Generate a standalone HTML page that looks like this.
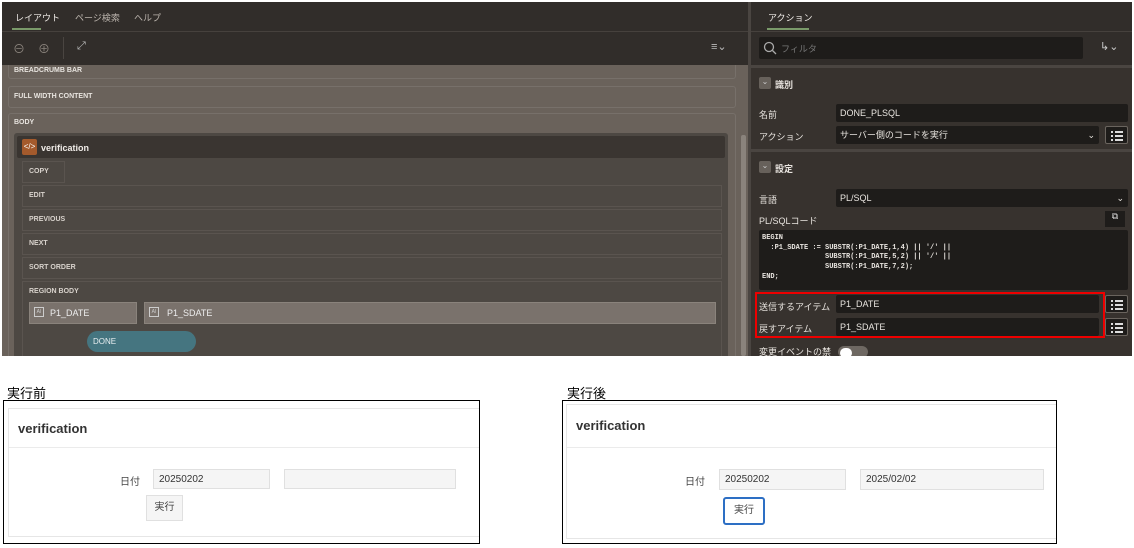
<!DOCTYPE html>
<html><head><meta charset="utf-8">
<style>
*{margin:0;padding:0;box-sizing:border-box}
body{width:1134px;height:548px;background:#fff;position:relative;overflow:hidden;font-family:"Liberation Sans","Noto Sans CJK JP",sans-serif}
.a{position:absolute}
.clip{position:absolute;left:0;top:0;width:1134px;height:356px;overflow:hidden}
.t{color:#e8e4df;font-size:9px;font-weight:bold}
.row{position:absolute;left:22px;width:700px;height:22px;border:1px solid #5a544f;background:#4d4843}
.row span{position:absolute;left:6px;top:6px;font-size:7px;color:#d8d2cc;font-weight:bold}
.rl{position:absolute;left:759px;font-size:9px;color:#e8e4df}
.ri{position:absolute;left:836px;width:292px;height:18px;background:#1e1c1a;border-radius:2px;color:#e8e4df;font-size:9px;padding:3px 4px;line-height:12px}
.lb{position:absolute;left:1105px;width:23px;height:18px;border:1px solid #6a645e;background:#1e1c1a;border-radius:2px}
.lb i{position:absolute;left:5px;width:12px;height:1.5px;background:#ddd}
.lb b{position:absolute;left:5px;width:2px;height:2px;background:#ddd}
.box{position:absolute;border:1px solid #000;background:#fff}
.inp{position:absolute;background:#f5f5f5;border:1px solid #e0e0e0;font-size:10px;color:#333;padding:0 5px;line-height:19px}
</style></head><body>
<div class="clip">
<div class="a" style="left:2px;top:2px;width:746px;height:354px;background:#6a625b"></div>
<div class="a" style="left:2px;top:2px;width:746px;height:30px;background:#312d2a;border-bottom:1px solid #46413d"></div>
<div class="a" style="left:15px;top:11px;font-size:9px;color:#f0ece8">レイアウト</div>
<div class="a" style="left:12px;top:28px;width:29px;height:2px;background:#7a9a6a"></div>
<div class="a" style="left:75px;top:11px;font-size:9px;color:#bbb4ad">ページ検索</div>
<div class="a" style="left:134px;top:11px;font-size:9px;color:#bbb4ad">ヘルプ</div>
<div class="a" style="left:2px;top:32px;width:746px;height:33px;background:#312d2a"></div>
<div class="a" style="left:13px;top:40px;font-size:12px;color:#8a837c">⊖</div>
<div class="a" style="left:38px;top:40px;font-size:12px;color:#8a837c">⊕</div>
<div class="a" style="left:63px;top:37px;width:1px;height:22px;background:#4a4541"></div>
<div class="a" style="left:77px;top:40px;font-size:11px;color:#bbb">⤢</div>
<div class="a" style="left:711px;top:40px;font-size:11px;color:#bbb">≡⌄</div>
<div class="a" style="left:8px;top:65px;width:728px;height:14px;border:1px solid #77706a;border-top:none;border-radius:0 0 3px 3px"></div>
<div class="a t" style="left:14px;top:67px;font-size:7px">BREADCRUMB BAR</div>
<div class="a" style="left:8px;top:86px;width:728px;height:22px;border:1px solid #77706a;border-radius:3px"></div>
<div class="a t" style="left:14px;top:93px;font-size:7px">FULL WIDTH CONTENT</div>
<div class="a" style="left:8px;top:113px;width:728px;height:260px;border:1px solid #77706a;border-radius:3px"></div>
<div class="a t" style="left:14px;top:119px;font-size:7px">BODY</div>
<div class="a" style="left:14px;top:133px;width:714px;height:240px;background:#4d4843;border-radius:3px"></div>
<div class="a" style="left:17px;top:136px;width:708px;height:22px;background:#3a3531;border-radius:2px"></div>
<div class="a" style="left:22px;top:139px;width:15px;height:16px;background:#a45a2c;border-radius:2px;color:#fff;font-size:8px;text-align:center;line-height:16px">&lt;/&gt;</div>
<div class="a" style="left:41px;top:143px;font-size:9px;color:#f0ece8;font-weight:bold">verification</div>
<div class="row" style="top:161px;width:43px"><span>COPY</span></div>
<div class="row" style="top:185px"><span>EDIT</span></div>
<div class="row" style="top:209px"><span>PREVIOUS</span></div>
<div class="row" style="top:233px"><span>NEXT</span></div>
<div class="row" style="top:257px"><span>SORT ORDER</span></div>
<div class="row" style="top:281px;height:90px"><span>REGION BODY</span></div>
<div class="a" style="left:29px;top:302px;width:108px;height:22px;background:#7a726c;border:1px solid #8a837c;color:#eee;font-size:9px;padding:5px 0 0 20px">P1_DATE</div>
<div class="a" style="left:34px;top:307px;width:10px;height:10px;border:1px solid #ccc;font-size:5px;color:#ccc;text-align:center;line-height:8px">AI</div>
<div class="a" style="left:144px;top:302px;width:572px;height:22px;background:#7a726c;border:1px solid #8a837c;color:#eee;font-size:9px;padding:5px 0 0 22px">P1_SDATE</div>
<div class="a" style="left:149px;top:307px;width:10px;height:10px;border:1px solid #ccc;font-size:5px;color:#ccc;text-align:center;line-height:8px">AI</div>
<div class="a" style="left:87px;top:331px;width:109px;height:21px;background:#457580;border-radius:11px;color:#e8eef0;font-size:8px;padding:6px 0 0 6px">DONE</div>
<div class="a" style="left:741px;top:135px;width:5px;height:221px;background:#8a837c;border-radius:2px"></div>
<div class="a" style="left:748px;top:2px;width:3px;height:354px;background:#4a4541"></div>
<div class="a" style="left:751px;top:2px;width:381px;height:354px;background:#37322e"></div>
<div class="a" style="left:751px;top:2px;width:381px;height:30px;background:#312d2a;border-bottom:1px solid #46413d"></div>
<div class="a" style="left:768px;top:11px;font-size:9px;color:#f0ece8">アクション</div>
<div class="a" style="left:767px;top:28px;width:42px;height:2px;background:#7a9a6a"></div>
<div class="a" style="left:751px;top:32px;width:381px;height:33px;background:#312d2a"></div>
<div class="a" style="left:759px;top:37px;width:324px;height:22px;background:#1e1c1a;border-radius:2px"></div>
<svg class="a" style="left:763px;top:41px" width="14" height="14"><circle cx="6" cy="6" r="4.5" stroke="#aaa" stroke-width="1.3" fill="none"/><line x1="9.5" y1="9.5" x2="13" y2="13" stroke="#aaa" stroke-width="1.3"/></svg>
<div class="a" style="left:781px;top:42px;font-size:9px;color:#777">フィルタ</div>
<div class="a" style="left:1100px;top:40px;font-size:11px;color:#ccc">↳⌄</div>
<div class="a" style="left:751px;top:65px;width:381px;height:3px;background:#4a4541"></div>
<div class="a" style="left:759px;top:77px;width:12px;height:12px;background:#67615b;border-radius:2px;color:#ccc;font-size:8px;text-align:center">⌄</div>
<div class="a t" style="left:775px;top:78px">識別</div>
<div class="rl" style="top:108px">名前</div>
<div class="ri" style="top:104px">DONE_PLSQL</div>
<div class="rl" style="top:130px">アクション</div>
<div class="ri" style="top:126px;width:263px">サーバー側のコードを実行<span style="float:right">⌄</span></div>
<div class="lb" style="top:126px"><b style="top:4px"></b><i style="top:4px;left:9px;width:8px"></i><b style="top:8px"></b><i style="top:8px;left:9px;width:8px"></i><b style="top:12px"></b><i style="top:12px;left:9px;width:8px"></i></div>
<div class="a" style="left:751px;top:149px;width:381px;height:3px;background:#4a4541"></div>
<div class="a" style="left:759px;top:161px;width:12px;height:12px;background:#67615b;border-radius:2px;color:#ccc;font-size:8px;text-align:center">⌄</div>
<div class="a t" style="left:775px;top:162px">設定</div>
<div class="rl" style="top:193px">言語</div>
<div class="ri" style="top:189px">PL/SQL<span style="float:right">⌄</span></div>
<div class="rl" style="top:214px">PL/SQLコード</div>
<div class="a" style="left:1105px;top:211px;width:20px;height:16px;background:#1e1c1a;color:#ddd;font-size:9px;text-align:center">⧉</div>
<div class="a" style="left:759px;top:230px;width:369px;height:60px;background:#1e1c1a;border-radius:2px"></div>
<pre class="a" style="left:762px;top:234px;font-family:'Liberation Mono',monospace;font-size:7px;line-height:9.7px;color:#e8e4df;font-weight:bold">BEGIN
  :P1_SDATE := SUBSTR(:P1_DATE,1,4) || '/' ||
               SUBSTR(:P1_DATE,5,2) || '/' ||
               SUBSTR(:P1_DATE,7,2);
END;</pre>
<div class="a" style="left:755px;top:292px;width:350px;height:46px;border:2px solid #e00"></div>
<div class="rl" style="top:300px">送信するアイテム</div>
<div class="ri" style="top:295px;width:263px">P1_DATE</div>
<div class="lb" style="top:295px"><b style="top:4px"></b><i style="top:4px;left:9px;width:8px"></i><b style="top:8px"></b><i style="top:8px;left:9px;width:8px"></i><b style="top:12px"></b><i style="top:12px;left:9px;width:8px"></i></div>
<div class="rl" style="top:322px">戻すアイテム</div>
<div class="ri" style="top:318px;width:263px">P1_SDATE</div>
<div class="lb" style="top:318px"><b style="top:4px"></b><i style="top:4px;left:9px;width:8px"></i><b style="top:8px"></b><i style="top:8px;left:9px;width:8px"></i><b style="top:12px"></b><i style="top:12px;left:9px;width:8px"></i></div>
<div class="rl" style="top:345px">変更イベントの禁</div>
<div class="a" style="left:838px;top:346px;width:30px;height:12px;background:#6e6862;border-radius:6px"></div>
<div class="a" style="left:840px;top:348px;width:12px;height:10px;background:#fff;border-radius:5px"></div>
</div>
<div class="a" style="left:7px;top:383px;font-size:13px;color:#000">実行前</div>
<div class="box" style="left:3px;top:400px;width:477px;height:144px"></div>
<div class="a" style="left:8px;top:408px;width:471px;height:129px;border:1px solid #e6e6e6;border-right:none"></div>
<div class="a" style="left:9px;top:447px;width:470px;height:1px;background:#ebebeb"></div>
<div class="a" style="left:18px;top:421px;font-size:13px;font-weight:bold;color:#333">verification</div>
<div class="a" style="left:120px;top:473px;font-size:10px;color:#444">日付</div>
<div class="inp" style="left:153px;top:469px;width:117px;height:20px">20250202</div>
<div class="inp" style="left:284px;top:469px;width:172px;height:20px"></div>
<div class="a" style="left:146px;top:495px;width:37px;height:26px;background:#f5f5f5;border:1px solid #e0e0e0;font-size:10px;color:#444;text-align:center;line-height:24px">実行</div>
<div class="a" style="left:567px;top:383px;font-size:13px;color:#000">実行後</div>
<div class="box" style="left:562px;top:400px;width:495px;height:144px"></div>
<div class="a" style="left:566px;top:404px;width:490px;height:135px;border:1px solid #e6e6e6;border-right:none"></div>
<div class="a" style="left:567px;top:447px;width:489px;height:1px;background:#ebebeb"></div>
<div class="a" style="left:576px;top:418px;font-size:13px;font-weight:bold;color:#333">verification</div>
<div class="a" style="left:685px;top:473px;font-size:10px;color:#444">日付</div>
<div class="inp" style="left:719px;top:469px;width:127px;height:21px">20250202</div>
<div class="inp" style="left:860px;top:469px;width:184px;height:21px">2025/02/02</div>
<div class="a" style="left:723px;top:497px;width:42px;height:28px;background:#fff;border:2px solid #2d6fc4;border-radius:3px;font-size:10px;color:#444;text-align:center;line-height:24px">実行</div>
</body></html>
